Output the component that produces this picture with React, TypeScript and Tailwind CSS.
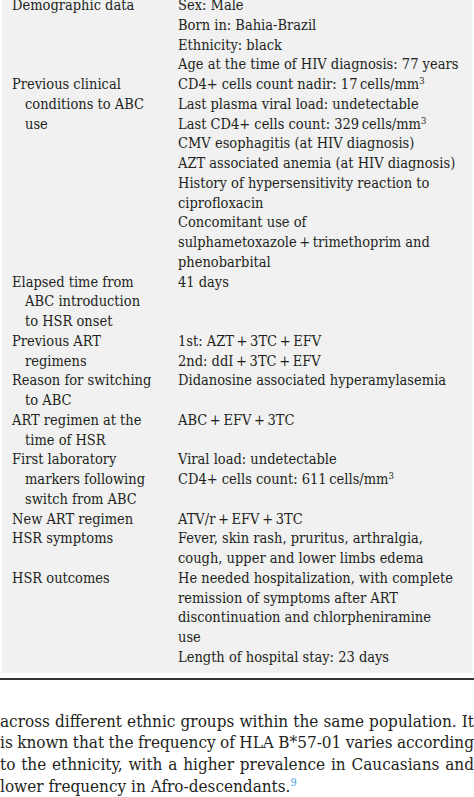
import React from "react";

const T = "\u2009";
const Cells = ({ n }: { n: string }) => (
  <>
    {n}
    {T}cells/mm<sup className="text-[9.5px]">3</sup>
  </>
);

type Row = { l: string[]; r: React.ReactNode[] };

const rows: Row[] = [
  {
    l: ["Demographic data"],
    r: ["Sex: Male", "Born in: Bahia-Brazil", "Ethnicity: black", "Age at the time of HIV diagnosis: 77 years"],
  },
  {
    l: ["Previous clinical", "conditions to ABC", "use"],
    r: [
      <>CD4+ cells count nadir: <Cells n="17" /></>,
      "Last plasma viral load: undetectable",
      <>Last CD4+ cells count: <Cells n="329" /></>,
      "CMV esophagitis (at HIV diagnosis)",
      "AZT associated anemia (at HIV diagnosis)",
      "History of hypersensitivity reaction to",
      "ciprofloxacin",
      "Concomitant use of",
      `sulphametoxazole${T}+${T}trimethoprim and`,
      "phenobarbital",
    ],
  },
  { l: ["Elapsed time from", "ABC introduction", "to HSR onset"], r: ["41 days"] },
  {
    l: ["Previous ART", "regimens"],
    r: [`1st: AZT${T}+${T}3TC${T}+${T}EFV`, `2nd: ddI${T}+${T}3TC${T}+${T}EFV`],
  },
  { l: ["Reason for switching", "to ABC"], r: ["Didanosine associated hyperamylasemia"] },
  { l: ["ART regimen at the", "time of HSR"], r: [`ABC${T}+${T}EFV${T}+${T}3TC`] },
  {
    l: ["First laboratory", "markers following", "switch from ABC"],
    r: ["Viral load: undetectable", <>CD4+ cells count: <Cells n="611" /></>],
  },
  { l: ["New ART regimen"], r: [`ATV/r${T}+${T}EFV${T}+${T}3TC`] },
  { l: ["HSR symptoms"], r: ["Fever, skin rash, pruritus, arthralgia,", "cough, upper and lower limbs edema"] },
  {
    l: ["HSR outcomes"],
    r: [
      "He needed hospitalization, with complete",
      "remission of symptoms after ART",
      "discontinuation and chlorpheniramine",
      "use",
      "Length of hospital stay: 23 days",
    ],
  },
];

export default function App() {
  return (
    <div
      className="w-[474px] h-[797px] overflow-hidden bg-white text-[#231f20]"
      style={{ fontFamily: '"DejaVu Serif Condensed", "DejaVu Serif", "Liberation Serif", serif', fontStretch: "condensed" }}
    >
      <div className="ml-[2px] w-[470px] bg-[#f0f1f0] pl-[10px] pb-[5px]">
        <div className="-mt-[4px] text-[14.5px] leading-[19.75px]">
          {rows.map((row, i) => (
            <div key={i} className="grid grid-cols-[166px_1fr]">
              <div>
                {row.l.map((t, j) => (
                  <div key={j} className={`whitespace-nowrap ${j > 0 ? "pl-[13px]" : ""}`}>
                    {t}
                  </div>
                ))}
              </div>
              <div>
                {row.r.map((t, j) => (
                  <div key={j} className="whitespace-nowrap">
                    {t}
                  </div>
                ))}
              </div>
            </div>
          ))}
        </div>
      </div>
      <div className="h-[5px]" />
      <div className="h-[2px] bg-[#333333]" />
      <div className="mt-[31px] w-[474px] text-[17px] leading-[21.8px]">
        <div className="[text-align-last:justify] text-justify whitespace-nowrap [word-spacing:-2px]">
          across different ethnic groups within the same population. It
        </div>
        <div className="[text-align-last:justify] text-justify whitespace-nowrap [word-spacing:-2px]">
          is known that the frequency of HLA B*57-01 varies according
        </div>
        <div className="[text-align-last:justify] text-justify whitespace-nowrap [word-spacing:-2px]">
          to the ethnicity, with a higher prevalence in Caucasians and
        </div>
        <div className="whitespace-nowrap">
          lower frequency in Afro-descendants.<sup className="text-[11px] text-[#4aa3df]">9</sup>
        </div>
      </div>
    </div>
  );
}
